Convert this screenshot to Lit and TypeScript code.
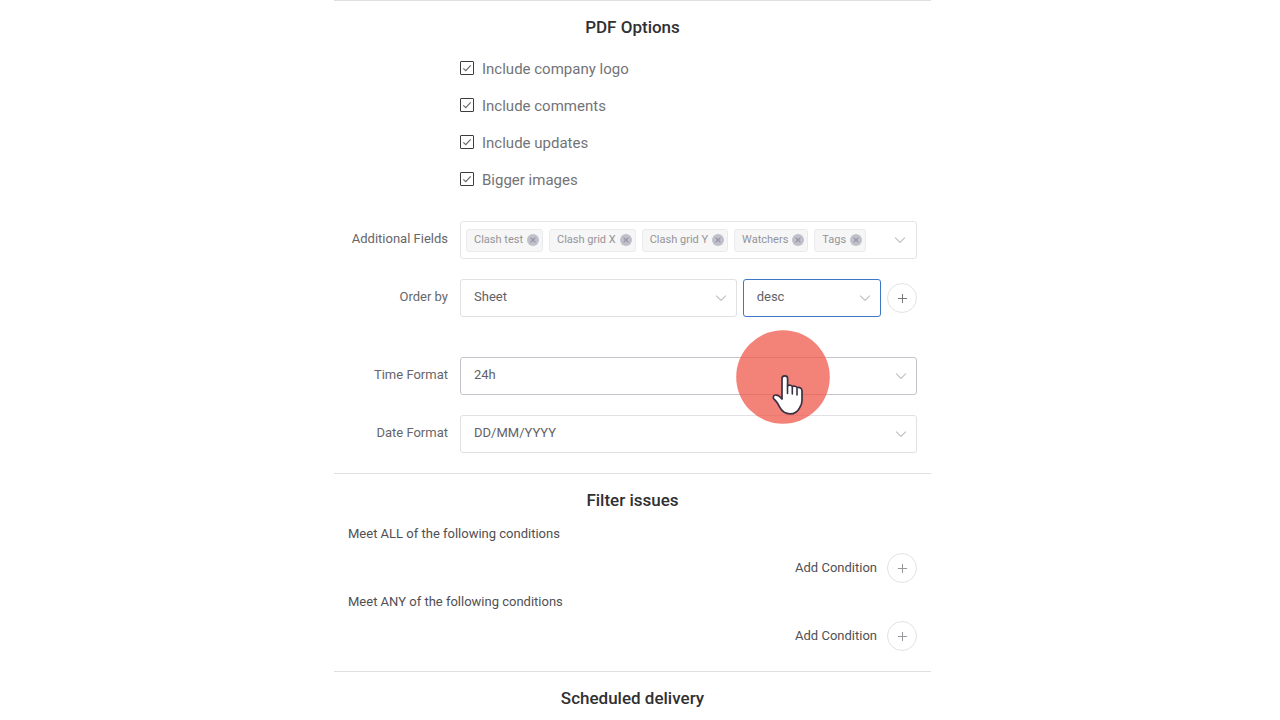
import { LitElement, html, css, svg } from "lit";
import { customElement, property, state } from "lit/decorators.js";
import { classMap } from "lit/directives/class-map.js";

const chevron = html`<svg class="chevron" viewBox="0 0 12 12" width="12" height="12" aria-hidden="true">
  <path d="M1.4 3.8 6 8.3 10.6 3.8" fill="none" stroke="#bebec4" stroke-width="1.1" stroke-linecap="round" stroke-linejoin="round" />
</svg>`;

const plusPath = svg`<path d="M6 1v10M1 6h10" fill="none" stroke="currentColor" stroke-width="1.1" />`;

@customElement("select-field")
class SelectField extends LitElement {
  @property() name = "";
  @property() label = "";
  @property({ type: Array }) options: string[] = [];
  @property() tone = "";

  static styles = css`
    :host {
      display: block;
      min-width: 0;
    }
    .box {
      display: grid;
      grid-template-columns: 1fr auto;
      align-items: center;
    }
    .select {
      grid-area: 1 / 1 / 2 / 3;
      appearance: none;
      box-sizing: border-box;
      width: 100%;
      height: 38px;
      margin: 0;
      padding: 0 32px 2px 13px;
      border: 1px solid #e0e0e5;
      border-radius: 3px;
      background: #fff;
      color: #626266;
      font: 13px/20px Roboto, "Liberation Sans", sans-serif;
      outline: none;
    }
    .hover {
      border-color: #c4c4ca;
    }
    .focus {
      border-color: #3c78c8;
    }
    .chevron {
      grid-area: 1 / 2;
      margin-right: 10px;
      pointer-events: none;
    }
  `;

  render() {
    return html`<div class="box">
      <select
        class=${classMap({ select: true, hover: this.tone === "hover", focus: this.tone === "focus" })}
        name=${this.name}
        aria-label=${this.label}
      >
        ${this.options.map((o) => html`<option>${o}</option>`)}
      </select>
      ${chevron}
    </div>`;
  }
}

@customElement("plus-button")
class PlusButton extends LitElement {
  @property() label = "";
  @property({ type: Boolean }) strong = false;

  static styles = css`
    :host {
      display: block;
      flex: none;
    }
    .button {
      display: grid;
      place-items: center;
      box-sizing: border-box;
      width: 30px;
      height: 30px;
      padding: 0;
      border: 1px solid #e2e2e4;
      border-radius: 50%;
      background: #fff;
      color: #98989c;
    }
    .strong {
      color: #77777b;
    }
  `;

  render() {
    return html`<button
      type="button"
      class=${classMap({ button: true, strong: this.strong })}
      aria-label=${this.label}
    >
      <svg viewBox="0 0 12 12" width="11" height="11" aria-hidden="true">${plusPath}</svg>
    </button>`;
  }
}

@customElement("app-root")
class AppRoot extends LitElement {
  @state() private fields = ["Clash test", "Clash grid X", "Clash grid Y", "Watchers", "Tags"];

  private checks = [
    { id: "logo", text: "Include company logo" },
    { id: "comments", text: "Include comments" },
    { id: "updates", text: "Include updates" },
    { id: "images", text: "Bigger images" },
  ];

  static styles = css`
    :host {
      display: block;
      box-sizing: border-box;
      height: 100vh;
      overflow: hidden;
      padding-right: 15px;
      background: #fff;
      color: #505054;
      font: 13px/20px Roboto, "Liberation Sans", sans-serif;
    }
    .panel {
      max-width: 597px;
      margin: 0 auto;
    }
    .section {
      border-top: 1px solid #e0e0e2;
      padding: 14px 14px 20px;
    }
    .title {
      margin: 0;
      color: #303033;
      font-size: 17px;
      line-height: 24px;
      font-weight: 500;
      text-align: center;
    }
    .checks {
      display: grid;
      gap: 13px;
      margin: 18px 0 29px 112px;
    }
    .check {
      display: flex;
      align-items: center;
      gap: 8px;
      color: #737377;
      font-size: 15px;
      line-height: 24px;
    }
    .tick {
      display: grid;
      margin-bottom: 2px;
    }
    .tick-input {
      grid-area: 1 / 1;
      appearance: none;
      box-sizing: border-box;
      width: 14px;
      height: 14px;
      margin: 0;
      border: 1px solid #3b3b40;
      border-radius: 1px;
    }
    .tick-mark {
      grid-area: 1 / 1;
      pointer-events: none;
      visibility: hidden;
    }
    .tick-input:checked + .tick-mark {
      visibility: visible;
    }
    .rows {
      display: grid;
      gap: 20px;
    }
    .row {
      display: grid;
      grid-template-columns: 100px minmax(0, 1fr);
      gap: 12px;
      align-items: center;
    }
    .row-order {
      margin-bottom: 20px;
    }
    .label {
      padding-bottom: 2px;
      color: #66666a;
      text-align: right;
    }
    .tags {
      display: flex;
      align-items: center;
      gap: 6px;
      box-sizing: border-box;
      height: 38px;
      padding: 0 10px 0 5px;
      border: 1px solid #e6e6e9;
      border-radius: 3px;
    }
    .tag {
      display: flex;
      align-items: center;
      gap: 4px;
      box-sizing: border-box;
      height: 23px;
      padding: 0 3px 0 7px;
      border: 1px solid #ebebed;
      border-radius: 3px;
      background: #f6f6f7;
      color: #949498;
      font-size: 11px;
      white-space: nowrap;
    }
    .remove,
    .open {
      display: grid;
      padding: 0;
      border: 0;
      background: none;
    }
    .open {
      margin-left: auto;
    }
    .order {
      display: flex;
      align-items: center;
      gap: 6px;
    }
    .order-field {
      flex: 2 1 0;
    }
    .order-direction {
      flex: 1 1 0;
    }
    .pointed {
      position: relative;
    }
    .pointer {
      position: absolute;
      left: 276px;
      top: -27px;
      pointer-events: none;
    }
    .condition {
      margin: 12px 0 9px;
    }
    .add {
      display: flex;
      align-items: center;
      justify-content: flex-end;
      gap: 10px;
    }
    .add + .condition {
      margin-top: 9px;
    }
  `;

  private remove(name: string) {
    this.fields = this.fields.filter((f) => f !== name);
  }

  private renderPointer() {
    return html`<svg class="pointer" viewBox="0 0 94 94" width="94" height="94" aria-hidden="true">
      <circle cx="47" cy="47" r="46.8" fill="#ef5849" fill-opacity="0.74" />
      <path
        d="M46 48.4c0-3.5 5.6-3.5 5.6 0v7.4c1.8-1.2 4.2-.6 4.7.8 1.7-.9 4.1-.3 4.7 1.1 2.6-.7 5 .3 5 3.2v9.6c0 3-.8 4.8-2.1 6.8-2 4-5.3 6.6-9.8 6.6-4.9 0-8.2-2.6-10.4-6.7-1.3-2.5-2.5-4.7-4.2-6.5l-1.5-1.5c-1.5-1.7-.6-4.2 1.7-4.2 2.5 0 4.4 1.5 6.3 4z"
        fill="#fff"
        stroke="#3a3043"
        stroke-width="1.7"
        stroke-linejoin="round"
      />
      <path d="M51.5 56v7.5M56.3 57.5v6.5M61 58.8v6.2" fill="none" stroke="#3a3043" stroke-width="1.6" stroke-linecap="round" />
    </svg>`;
  }

  private renderAdd(label: string) {
    return html`<div class="add">
      <span>Add Condition</span>
      <plus-button label=${label}></plus-button>
    </div>`;
  }

  render() {
    return html`<main class="panel">
      <section class="section">
        <h2 class="title">PDF Options</h2>
        <div class="checks">
          ${this.checks.map(
            (c) => html`<label class="check" for=${c.id}>
              <span class="tick">
                <input class="tick-input" type="checkbox" id=${c.id} checked />
                <svg class="tick-mark" viewBox="0 0 14 14" width="14" height="14" aria-hidden="true">
                  <path d="M3.3 7.3 5.8 9.7 10.7 4.3" fill="none" stroke="#66666b" stroke-width="1.1" />
                </svg>
              </span>
              ${c.text}
            </label>`,
          )}
        </div>
        <div class="rows">
          <div class="row">
            <span class="label" id="fields-label">Additional Fields</span>
            <div class="tags" role="group" aria-labelledby="fields-label">
              ${this.fields.map(
                (f) => html`<span class="tag">
                  ${f}
                  <button class="remove" type="button" aria-label="Remove ${f}" @click=${() => this.remove(f)}>
                    <svg viewBox="0 0 12 12" width="12" height="12" aria-hidden="true">
                      <circle cx="6" cy="6" r="6" fill="#bfc0cb" />
                      <path d="m3.6 3.6 4.8 4.8m0-4.8-4.8 4.8" stroke="#9393a0" stroke-width="1.1" />
                    </svg>
                  </button>
                </span>`,
              )}
              <button class="open" type="button" aria-label="Choose fields">${chevron}</button>
            </div>
          </div>
          <div class="row row-order">
            <span class="label">Order by</span>
            <div class="order">
              <select-field class="order-field" name="order" label="Order by" .options=${["Sheet"]}></select-field>
              <select-field
                class="order-direction"
                name="direction"
                label="Order direction"
                tone="focus"
                .options=${["desc", "asc"]}
              ></select-field>
              <plus-button label="Add order" strong></plus-button>
            </div>
          </div>
          <div class="row">
            <span class="label">Time Format</span>
            <div class="pointed">
              <select-field name="time" label="Time Format" tone="hover" .options=${["24h", "12h"]}></select-field>
              ${this.renderPointer()}
            </div>
          </div>
          <div class="row">
            <span class="label">Date Format</span>
            <select-field name="date" label="Date Format" .options=${["DD/MM/YYYY", "MM/DD/YYYY"]}></select-field>
          </div>
        </div>
      </section>
      <section class="section">
        <h2 class="title">Filter issues</h2>
        <p class="condition">Meet ALL of the following conditions</p>
        ${this.renderAdd("Add ALL condition")}
        <p class="condition">Meet ANY of the following conditions</p>
        ${this.renderAdd("Add ANY condition")}
      </section>
      <section class="section">
        <h2 class="title">Scheduled delivery</h2>
      </section>
    </main>`;
  }
}
